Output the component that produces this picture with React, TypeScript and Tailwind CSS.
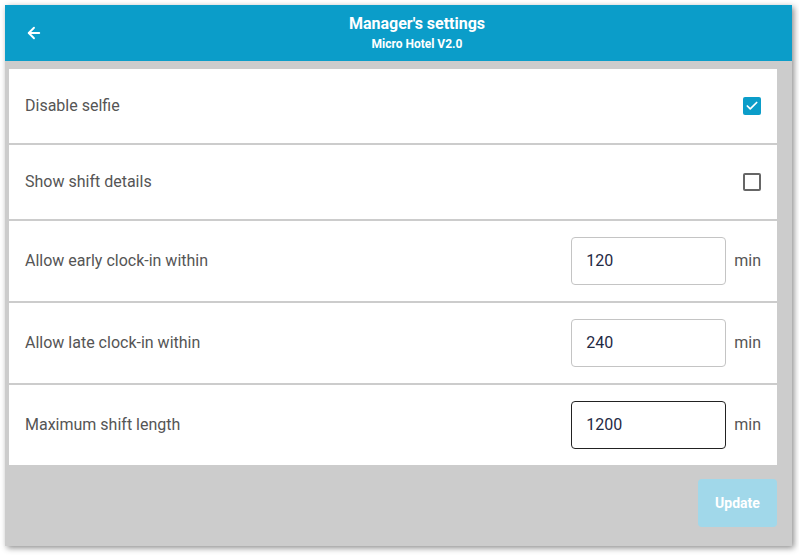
import { ArrowLeft, Check } from "lucide-react";

const font = { fontFamily: "Roboto, 'Liberation Sans', sans-serif" };

function CheckRow({ label, checked }: { label: string; checked: boolean }) {
  return (
    <div className="flex h-[74px] items-center justify-between bg-white pl-4 pr-4">
      <span className="text-[16px] text-[#555555]">{label}</span>
      {checked ? (
        <span className="flex h-[18px] w-[18px] items-center justify-center rounded-[2px] bg-[#0b9dc9]">
          <Check className="h-[14px] w-[14px] text-white" strokeWidth={3} />
        </span>
      ) : (
        <span className="h-[18px] w-[18px] rounded-[2px] border-2 border-[#666666]" />
      )}
    </div>
  );
}

function InputRow({
  label,
  value,
  focused,
}: {
  label: string;
  value: string;
  focused?: boolean;
}) {
  return (
    <div className="flex h-[80px] items-center justify-between bg-white pl-4 pr-4">
      <span className="text-[16px] text-[#555555]">{label}</span>
      <div className="flex items-center gap-[8px]">
        <div
          className={
            focused
              ? "flex h-[48px] w-[155px] items-center rounded-[4px] border border-[#222222] px-[14px] text-[16px] text-[#1f2a44]"
              : "flex h-[48px] w-[155px] items-center rounded-[4px] border border-[#c4c4c4] px-[14px] text-[16px] text-[#1f2a44]"
          }
        >
          {value}
        </div>
        <span className="text-[16px] text-[#555555]">min</span>
      </div>
    </div>
  );
}

export default function App() {
  return (
    <div className="h-[555px] w-[799px] bg-white pl-[5px] pt-[5px]" style={font}>
      <div className="flex h-[541px] w-[787px] flex-col bg-[#cccccc] shadow-[2px_2px_6px_rgba(0,0,0,0.45)]">
        <header className="relative flex h-[56px] shrink-0 flex-col items-center justify-center bg-[#0b9dc9] pl-[37px] text-white">
          <ArrowLeft className="absolute left-[20px] top-[19px] h-[18px] w-[18px]" strokeWidth={2.5} />
          <div className="text-[16px] font-bold leading-[20px]">Manager's settings</div>
          <div className="mt-[2px] text-[12px] font-bold leading-[16px]">Micro Hotel V2.0</div>
        </header>
        <div className="flex flex-1 flex-col pl-[4px] pr-[15px] pt-[8px]">
          <div className="flex flex-col gap-[2px] bg-[#cccccc]">
            <CheckRow label="Disable selfie" checked />
            <CheckRow label="Show shift details" checked={false} />
            <InputRow label="Allow early clock-in within" value="120" />
            <InputRow label="Allow late clock-in within" value="240" />
            <InputRow label="Maximum shift length" value="1200" focused />
          </div>
          <div className="mt-[14px] flex justify-end">
            <button className="h-[48px] w-[79px] rounded-[4px] bg-[#a1d8ea] text-[14px] font-bold text-white">
              Update
            </button>
          </div>
        </div>
      </div>
    </div>
  );
}
